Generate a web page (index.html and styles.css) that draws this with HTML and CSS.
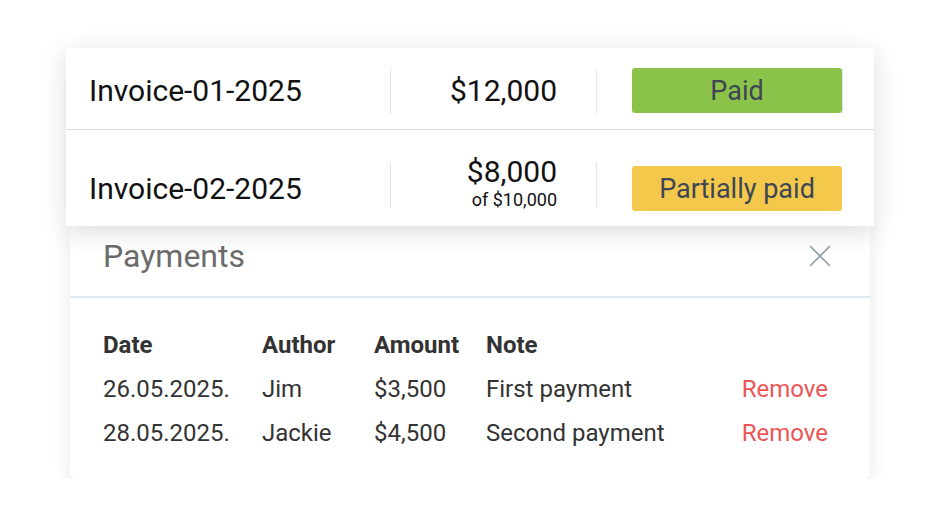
FILE: index.html
```html
<!DOCTYPE html>
<html lang="en">
<head>
  <meta charset="UTF-8">
  <title>Invoices</title>
  <link rel="stylesheet" href="styles.css">
</head>
<body>
  <div class="wrap">
    <div class="invoices">
      <div class="invoice-row first">
        <div class="cell name">Invoice-01-2025</div>
        <div class="cell amount"><span class="sum">$12,000</span></div>
        <div class="cell status bordered"><span class="badge paid">Paid</span></div>
      </div>
      <div class="invoice-row second">
        <div class="cell name">Invoice-02-2025</div>
        <div class="cell amount">
          <div class="amount-inner">
            <span class="sum">$8,000</span>
            <span class="of">of $10,000</span>
          </div>
        </div>
        <div class="cell status"><span class="badge partial">Partially paid</span></div>
      </div>
    </div>

    <div class="payments">
      <div class="payments-head">
        <h2>Payments</h2>
        <svg class="close" width="22" height="22" viewBox="0 0 22 22">
          <path d="M1 1L21 21M21 1L1 21" stroke="#8d9ca8" stroke-width="1.6" fill="none"/>
        </svg>
      </div>
      <div class="payments-body">
        <div class="pay-row head">
          <span>Date</span><span>Author</span><span>Amount</span><span>Note</span><span></span>
        </div>
        <div class="pay-row">
          <span>26.05.2025.</span><span>Jim</span><span>$3,500</span><span>First payment</span><a href="#" class="remove">Remove</a>
        </div>
        <div class="pay-row">
          <span>28.05.2025.</span><span>Jackie</span><span>$4,500</span><span>Second payment</span><a href="#" class="remove">Remove</a>
        </div>
      </div>
    </div>
  </div>
</body>
</html>
```

FILE: styles.css
```css
* {
  box-sizing: border-box;
}
body {
  font-family: Roboto, "Liberation Sans", Arial, sans-serif;
  margin: 0;
  padding: 0;
  background: #fff;
  color: #222;
}
.wrap {
  width: 874px;
  padding: 48px 0 0 66px;
}

.invoices {
  position: relative;
  z-index: 1;
  background: #fff;
  border-radius: 4px 4px 0 0;
  box-shadow: 0 6px 24px rgba(40, 50, 60, 0.17);
}
.invoice-row {
  display: flex;
  align-items: center;
}
.invoice-row.first {
  padding: 20px 0 16px;
  border-bottom: 1px solid #d3dbe1;
}
.invoice-row.second {
  padding: 36px 0 15px;
}
.cell {
  height: 45px;
  display: flex;
  align-items: center;
}
.name {
  width: 324px;
  padding-left: 23px;
  font-size: 30px;
  color: #111;
}
.amount {
  width: 207px;
  padding-right: 39px;
  justify-content: flex-end;
  border-left: 1px dotted #c9d4db;
  border-right: 1px dotted #c9d4db;
}
.second .amount {
  margin-top: -7px;
}
.amount-inner {
  display: flex;
  flex-direction: column;
  align-items: flex-end;
  margin-top: -3px;
}
.sum {
  font-size: 30px;
  color: #111;
  line-height: 30px;
}
.of {
  font-size: 18px;
  color: #111;
  line-height: 20px;
  padding-top: 3px;
}
.status {
  width: 246px;
  padding-left: 35px;
}
.status.bordered {
  border-right: 1px dotted #c9d4db;
}
.badge {
  display: block;
  width: 210px;
  height: 45px;
  line-height: 46px;
  text-align: center;
  font-size: 27px;
  color: #3d4654;
  border-radius: 3px;
}
.paid {
  background: #8bc34a;
}
.partial {
  background: #f4c84b;
}

.payments {
  margin: 0 4px;
  background: #fff;
  border-radius: 0 0 7px 7px;
  box-shadow: 0 4px 18px rgba(40, 50, 60, 0.11);
}
.payments-head {
  height: 72px;
  display: flex;
  align-items: center;
  justify-content: space-between;
  padding: 0 39px 10px 33px;
  border-bottom: 2px solid #e1e9f0;
}
.payments-head h2 {
  margin: 0;
  font-size: 32px;
  font-weight: normal;
  color: #6b6b6b;
}
.payments-body {
  padding: 25px 42px 24px 33px;
}
.pay-row {
  display: grid;
  grid-template-columns: 159px 112px 112px 1fr auto;
  height: 44px;
  line-height: 44px;
  font-size: 24px;
  color: #333;
}
.pay-row.head {
  font-weight: bold;
}
.remove {
  color: #ec5656;
  text-decoration: none;
}
```
